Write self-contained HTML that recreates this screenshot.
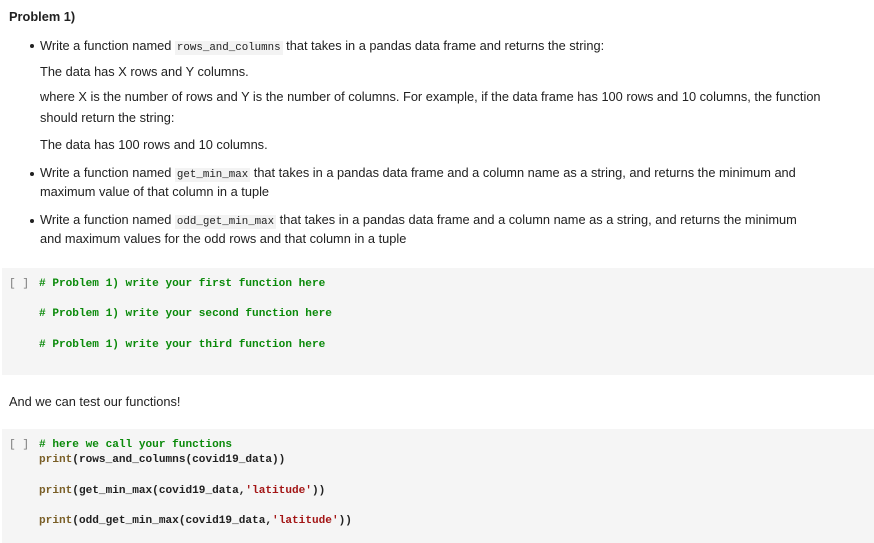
<!DOCTYPE html>
<html><head><meta charset="utf-8"><style>
body{margin:0;width:874px;height:543px;background:#fff;position:relative;overflow:hidden;font-family:"Liberation Sans",sans-serif;color:#212121;font-size:12.8px}
.t{position:absolute;white-space:nowrap;line-height:15px}
.b{position:absolute;left:30px;width:4px;height:4px;border-radius:50%;background:#212121}
code{font-family:"Liberation Mono",monospace;font-size:10.8px;background:#f3f3f3;padding:1px 2px}
.cell{position:absolute;left:2px;width:872px;background:#f5f5f5}
.m{position:absolute;font-family:"Liberation Mono",monospace;font-size:11.1px;white-space:pre;line-height:13px;color:#212121;font-weight:bold}
.c{color:#0a8a0a}.p{color:#795e26}.s{color:#a31515}.br{color:#777;font-weight:normal}
</style></head><body>
<div class="t" style="left:9px;top:9px;font-weight:bold">Problem 1)</div>
<div class="b" style="top:44px"></div>
<div class="t" style="left:40px;top:38px">Write a function named <code>rows_and_columns</code> that takes in a pandas data frame and returns the string:</div>
<div class="t" style="left:40px;top:64px">The data has X rows and Y columns.</div>
<div class="t" style="left:40px;top:89px">where X is the number of rows and Y is the number of columns. For example, if the data frame has 100 rows and 10 columns, the function</div>
<div class="t" style="left:40px;top:110px">should return the string:</div>
<div class="t" style="left:40px;top:137px">The data has 100 rows and 10 columns.</div>
<div class="b" style="top:172px"></div>
<div class="t" style="left:40px;top:165px">Write a function named <code>get_min_max</code> that takes in a pandas data frame and a column name as a string, and returns the minimum and</div>
<div class="t" style="left:40px;top:184px">maximum value of that column in a tuple</div>
<div class="b" style="top:219px"></div>
<div class="t" style="left:40px;top:212px">Write a function named <code>odd_get_min_max</code> that takes in a pandas data frame and a column name as a string, and returns the minimum</div>
<div class="t" style="left:40px;top:231px">and maximum values for the odd rows and that column in a tuple</div>

<div class="cell" style="top:268px;height:107px"></div>
<div class="m br" style="left:9px;top:278px">[ ]</div>
<div class="m c" style="left:39px;top:278px"># Problem 1) write your first function here</div>
<div class="m c" style="left:39px;top:308px"># Problem 1) write your second function here</div>
<div class="m c" style="left:39px;top:339px"># Problem 1) write your third function here</div>

<div class="t" style="left:9px;top:394px">And we can test our functions!</div>

<div class="cell" style="top:429px;height:114px"></div>
<div class="m br" style="left:9px;top:439px">[ ]</div>
<div class="m c" style="left:39px;top:439px"># here we call your functions</div>
<div class="m" style="left:39px;top:454px"><span class="p">print</span>(rows_and_columns(covid19_data))</div>
<div class="m" style="left:39px;top:485px"><span class="p">print</span>(get_min_max(covid19_data,<span class="s">'latitude'</span>))</div>
<div class="m" style="left:39px;top:515px"><span class="p">print</span>(odd_get_min_max(covid19_data,<span class="s">'latitude'</span>))</div>
</body></html>
